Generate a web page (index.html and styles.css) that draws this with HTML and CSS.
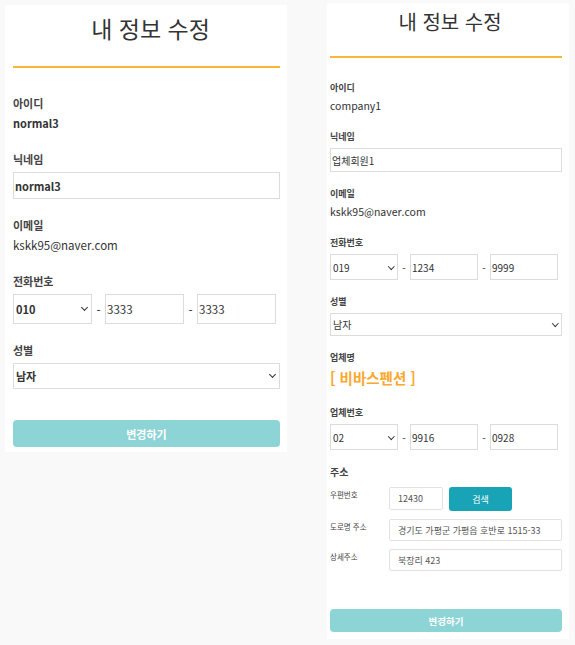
FILE: index.html
```html
<!DOCTYPE html>
<html lang="ko">
<head>
    <meta charset="UTF-8">
    <meta name="viewport" content="width=device-width, initial-scale=1.0">
    <title>내 정보 수정</title>
    <link rel="stylesheet" href="styles.css">
</head>
<body>
    <div class="page">
        <!-- 일반 회원 -->
        <div class="panel panel-user">
            <h1 class="title">내 정보 수정</h1>

            <div class="field">
                <div class="label">아이디</div>
                <div class="value bold">normal3</div>
            </div>
            <div class="field">
                <div class="label">닉네임</div>
                <input class="input bold" type="text" value="normal3">
            </div>
            <div class="field">
                <div class="label">이메일</div>
                <div class="value">kskk95@naver.com</div>
            </div>
            <div class="field">
                <div class="label">전화번호</div>
                <div class="phone">
                    <div class="select-wrap">
                        <select class="select bold">
                            <option>010</option>
                        </select>
                    </div>
                    <span class="dash">-</span>
                    <input class="input" type="text" value="3333">
                    <span class="dash">-</span>
                    <input class="input" type="text" value="3333">
                </div>
            </div>
            <div class="field">
                <div class="label">성별</div>
                <div class="select-wrap">
                    <select class="select wide bold">
                        <option>남자</option>
                    </select>
                </div>
            </div>

            <button class="submit" disabled>변경하기</button>
        </div>

        <!-- 업체 회원 -->
        <div class="panel panel-company">
            <h1 class="title">내 정보 수정</h1>

            <div class="field">
                <div class="label">아이디</div>
                <div class="value">company1</div>
            </div>
            <div class="field">
                <div class="label">닉네임</div>
                <input class="input" type="text" value="업체회원1">
            </div>
            <div class="field">
                <div class="label">이메일</div>
                <div class="value">kskk95@naver.com</div>
            </div>
            <div class="field">
                <div class="label">전화번호</div>
                <div class="phone">
                    <div class="select-wrap">
                        <select class="select">
                            <option>019</option>
                        </select>
                    </div>
                    <span class="dash">-</span>
                    <input class="input" type="text" value="1234">
                    <span class="dash">-</span>
                    <input class="input" type="text" value="9999">
                </div>
            </div>
            <div class="field">
                <div class="label">성별</div>
                <div class="select-wrap">
                    <select class="select wide">
                        <option>남자</option>
                    </select>
                </div>
            </div>
            <div class="field">
                <div class="label">업체명</div>
                <div class="company-name">[ 비바스펜션 ]</div>
            </div>
            <div class="field">
                <div class="label">업체번호</div>
                <div class="phone">
                    <div class="select-wrap">
                        <select class="select">
                            <option>02</option>
                        </select>
                    </div>
                    <span class="dash">-</span>
                    <input class="input" type="text" value="9916">
                    <span class="dash">-</span>
                    <input class="input" type="text" value="0928">
                </div>
            </div>
            <div class="field">
                <div class="label label-address">주소</div>
                <div class="address">
                    <div class="address-row">
                        <span class="address-label">우편번호</span>
                        <div class="zip">
                            <input class="input addr-input zip-input" type="text" value="12430">
                            <button class="search">검색</button>
                        </div>
                    </div>
                    <div class="address-row">
                        <span class="address-label">도로명 주소</span>
                        <input class="input addr-input" type="text" value="경기도 가평군 가평읍 호반로 1515-33">
                    </div>
                    <div class="address-row">
                        <span class="address-label">상세주소</span>
                        <input class="input addr-input" type="text" value="북장리 423">
                    </div>
                </div>
            </div>

            <button class="submit" disabled>변경하기</button>
        </div>
    </div>
</body>
</html>
```

FILE: styles.css
```css
* {
    box-sizing: border-box;
    margin: 0;
    padding: 0;
}

body {
    background-color: #f9f9f9;
    font-family: "Noto Sans CJK KR", "Noto Sans", sans-serif;
    color: #333;
}

.page {
    display: flex;
    align-items: flex-start;
    gap: 40px;
    padding-left: 5px;
}

.panel {
    background-color: #fff;
    display: flex;
    flex-direction: column;
}

.title {
    text-align: center;
    font-weight: normal;
    color: #333;
    padding-left: 8px;
    border-bottom: 2px solid #fbb63a;
}

.label {
    font-weight: bold;
    color: #444;
}

.bold {
    font-weight: bold;
}

.input,
.select {
    display: block;
    width: 100%;
    font-family: inherit;
    color: #333;
    background-color: #fff;
    border: 1px solid #dcdcdc;
    outline: none;
}

.input {
    padding: 0 1px;
}

.select {
    appearance: none;
    -webkit-appearance: none;
    border-radius: 0;
}

.select-wrap {
    position: relative;
}

/* 화살표 */
.select-wrap::after {
    content: '';
    position: absolute;
    top: 50%;
    width: 4px;
    height: 4px;
    margin-top: -4px;
    border-right: 1.5px solid #333;
    border-bottom: 1.5px solid #333;
    transform: rotate(45deg);
    pointer-events: none;
}

.phone {
    display: grid;
    align-items: center;
}

.dash {
    text-align: center;
    color: #333;
}

.submit {
    font-family: inherit;
    font-weight: bold;
    color: #fff;
    background-color: #8dd4d7;
    border: none;
    border-radius: 4px;
}

/* 일반 회원 패널 */
.panel-user {
    width: 282px;
    margin-top: 5px;
    padding: 8px 7px 5px 8px;
}

.panel-user .title {
    font-size: 23px;
    line-height: 30px;
    padding-bottom: 23px;
}

.panel-user .field {
    margin-top: 18px;
}

.panel-user .field:first-of-type {
    margin-top: 27px;
}

.panel-user .label {
    font-size: 11px;
    line-height: 16px;
    margin-bottom: 5px;
}

.panel-user .value {
    font-size: 11.5px;
    line-height: 16px;
    margin: -1px 0 2px;
}

.panel-user .value.bold {
    font-size: 11px;
}

.panel-user .input {
    font-size: 11.5px;
    height: 27px;
}

.panel-user .input.bold {
    font-size: 11px;
}

.panel-user .phone {
    grid-template-columns: 79px 13px 79px 13px 79px;
}

.panel-user .phone .input,
.panel-user .phone .select {
    height: 30px;
    font-size: 11.5px;
}

.panel-user .phone .select {
    font-size: 11px;
}

.panel-user .select {
    padding-left: 2px;
}

.panel-user .select.wide {
    height: 26px;
    font-size: 11px;
}

.panel-user .select-wrap::after {
    right: 5px;
}

.panel-user .dash {
    font-size: 12px;
}

.panel-user .submit {
    margin-top: 31px;
    height: 27px;
    font-size: 11px;
}

/* 업체 회원 패널 */
.panel-company {
    width: 242px;
    margin-top: 3px;
    padding: 6px 7px 7px 3px;
}

.panel-company .title {
    font-size: 20px;
    line-height: 26px;
    padding-bottom: 21px;
}

.panel-company .field {
    margin-top: 15px;
}

.panel-company .field:first-of-type {
    margin-top: 23px;
}

.panel-company .label {
    font-size: 9px;
    line-height: 14px;
    margin-bottom: 4px;
}

.panel-company .label-address {
    font-size: 10px;
    margin-bottom: 8px;
}

.panel-company .value {
    font-size: 10.5px;
    line-height: 14px;
    margin-bottom: 2px;
}

.panel-company .input {
    font-size: 10px;
    height: 24px;
}

.panel-company .phone {
    grid-template-columns: 68px 12px 68px 12px 68px;
}

.panel-company .phone .input,
.panel-company .phone .select {
    height: 26px;
    font-size: 10px;
}

.panel-company .select {
    padding-left: 2px;
}

.panel-company .select.wide {
    height: 23px;
    font-size: 10px;
}

.panel-company .select-wrap::after {
    right: 5px;
    width: 3.5px;
    height: 3.5px;
    margin-top: -3.5px;
    border-width: 1.2px;
}

.panel-company .dash {
    font-size: 10px;
}

.company-name {
    font-size: 14.5px;
    line-height: 18px;
    font-weight: bold;
    color: #fba82c;
    margin-bottom: 4px;
}

.address {
    display: flex;
    flex-direction: column;
    gap: 8px;
}

.address-row {
    display: grid;
    grid-template-columns: 59px 1fr;
    align-items: start;
}

.address-label {
    font-size: 7.5px;
    line-height: 10px;
    padding-top: 3px;
    color: #444;
}

.panel-company .addr-input {
    height: 22px;
    padding-left: 8px;
    font-size: 9px;
    color: #555;
    border-color: #e2e2e2;
    border-radius: 2px;
}

.zip {
    display: flex;
    gap: 6px;
}

.panel-company .zip-input {
    width: 54px;
    height: 23px;
}

.search {
    width: 63px;
    height: 24px;
    font-family: inherit;
    font-size: 9px;
    color: #fff;
    background-color: #19a3b6;
    border: none;
    border-radius: 3px;
}

.panel-company .submit {
    margin-top: 38px;
    height: 23px;
    font-size: 9.5px;
}
```
